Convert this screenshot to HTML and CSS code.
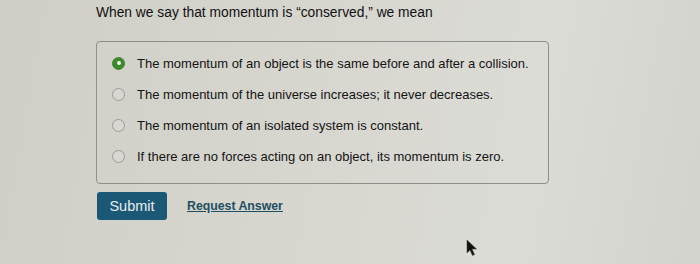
FILE: index.html
```html
<!DOCTYPE html>
<html>
<head>
<meta charset="utf-8">
<link rel="stylesheet" href="styles.css">
</head>
<body>
<div class="page">
  <p class="question">When we say that momentum is “conserved,” we mean</p>
  <div class="choices">
    <label class="choice"><span class="radio checked"></span><span class="text">The momentum of an object is the same before and after a collision.</span></label>
    <label class="choice"><span class="radio"></span><span class="text">The momentum of the universe increases; it never decreases.</span></label>
    <label class="choice"><span class="radio"></span><span class="text">The momentum of an isolated system is constant.</span></label>
    <label class="choice"><span class="radio"></span><span class="text">If there are no forces acting on an object, its momentum is zero.</span></label>
  </div>
  <div class="actions">
    <button class="submit">Submit</button>
    <a class="request" href="#">Request Answer</a>
  </div>
</div>
<svg class="cursor" width="12" height="18" viewBox="0 0 12 18"><path d="M1 1 L1 14 L4 11 L6.5 16.5 L8.5 15.5 L6 10 L10.5 10 Z" fill="#111" stroke="#444" stroke-width="0.6"/></svg>
</body>
</html>
```
FILE: styles.css
```css
html, body {
  margin: 0;
  width: 700px;
  height: 264px;
  overflow: hidden;
}
body {
  background: linear-gradient(100deg, #cfcec7 0%, #d6d5ce 40%, #dcdcd6 75%, #d3d3cd 100%);
  font-family: "Liberation Sans", Arial, sans-serif;
  color: #1c1c1c;
  position: relative;
}
.page {
  padding: 4px 0 0 96px;
}
.question {
  margin: 0;
  font-size: 13.8px;
  line-height: 18px;
  color: #111;
}
.choices {
  margin-top: 19px;
  width: 453px;
  height: 143px;
  border: 1px solid #8e8e8a;
  border-radius: 4px;
  box-sizing: border-box;
  display: flex;
  flex-direction: column;
  padding-top: 12px;
  gap: 13px;
}
.choice {
  display: flex;
  align-items: center;
  height: 18px;
  padding-left: 15px;
}
.radio {
  width: 11px;
  height: 11px;
  border: 1px solid #9b9b96;
  border-radius: 50%;
  background: #d8d7d1;
  box-sizing: content-box;
  flex: none;
  position: relative;
}
.radio.checked {
  background: #3c8a2c;
  border-color: #3c8a2c;
}
.radio.checked::after {
  content: "";
  position: absolute;
  left: 3.5px;
  top: 3.5px;
  width: 4px;
  height: 4px;
  border-radius: 50%;
  background: #f4f4f0;
}
.text {
  margin-left: 12px;
  font-size: 13px;
  color: #141414;
}
.actions {
  display: flex;
  align-items: center;
  margin-top: 8px;
  gap: 20px;
  padding-left: 1px;
}
.submit {
  width: 70px;
  height: 28px;
  border: none;
  border-radius: 3px;
  background: #1b5876;
  color: #e8eef0;
  font-family: "Liberation Sans", Arial, sans-serif;
  font-size: 14.5px;
  padding: 0;
}
.request {
  font-size: 12.3px;
  font-weight: bold;
  color: #1f4f63;
  text-decoration: underline;
}
.cursor {
  position: absolute;
  left: 466px;
  top: 239px;
}
```
